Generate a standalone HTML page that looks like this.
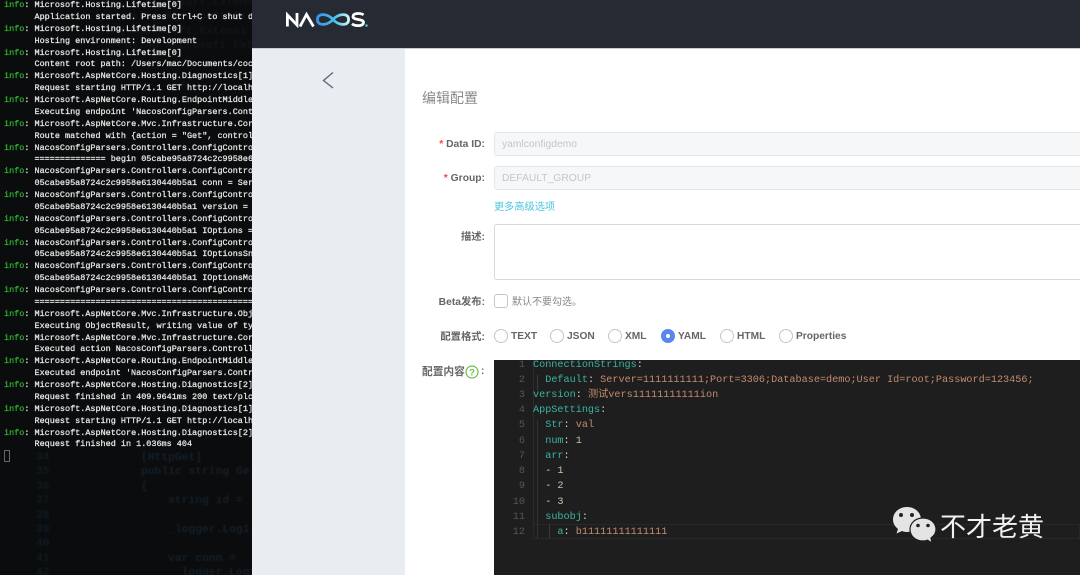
<!DOCTYPE html>
<html><head><meta charset="utf-8"><style>
html,body{margin:0;padding:0;width:1080px;height:575px;overflow:hidden;background:#fff}
body{position:relative;font-family:"Liberation Sans","Noto Sans CJK SC",sans-serif}
div,span.a{position:absolute;white-space:pre}
#term{left:0;top:0;width:252px;height:575px;background:#0b0c0d;overflow:hidden}
.ghost{font:bold 11.3px/14.4px "Liberation Mono",monospace;color:#141c20;filter:blur(.4px)}
#log{left:4px;top:0;width:248px;overflow:hidden;font:8.47px/11.87px "Liberation Mono","DejaVu Sans Mono",monospace;color:#e8e8e8;filter:blur(.3px);font-weight:400;-webkit-text-stroke:.25px #e8e8e8}
#log i{font-style:normal;color:#2fb52f;-webkit-text-stroke:.2px #2fb52f}
#nav{left:252px;top:0;width:828px;height:48px;background:#252a33}
#line{left:252px;top:48px;width:828px;height:1px;background:#c9ccd1}
#side{left:252px;top:49px;width:153px;height:526px;background:#e9ecf1}
.lb{right:595px;font-size:10.3px;line-height:14px;font-weight:700;color:#666;text-align:right}
.lb b{color:#f04a4a}
.inp{left:494px;width:590px;box-sizing:border-box;border:1px solid #e6e7eb;background:#f6f7f9;border-radius:3px;height:24px;font-size:10.3px;line-height:23px;color:#c4c6cc;padding-left:7px}
.rad{width:12px;height:12px;border:1px solid #c4c6cf;border-radius:50%;background:#fff;top:329px}
.rt{top:330px;font-size:10.2px;line-height:14px;font-weight:700;color:#666}
#ed{left:494px;top:360px;width:586px;height:215px;background:#1e1e1e;overflow:hidden}
.c{left:39px;margin-top:1px;font:10.18px/15px "Liberation Mono","Noto Sans CJK SC",monospace;color:#d4d4d4}
.n{left:0;width:31px;margin-top:1px;text-align:right;font:10.18px/15px "Liberation Mono",monospace;color:#555}
.k{color:#3bb5a0}.s{color:#c58a70}.v{color:#b5cea8}
</style></head><body>
<div id="term">
<div class="ghost" style="left:84px;top:-4px;color:#111618">         Microsoft.Extensi
      using Microsoft.Extensi
 using Microsoft.Extensi
      using Microsoft.Extensi</div>
<div class="ghost" style="left:36px;top:451px;color:#0f1c24">34
35
36
37
38
39
40
41
42</div>
<div class="ghost" style="left:141px;top:451px;color:#14202a">[HttpGet]
public string Ge
{
    string id =

    _logger.Log1

    var conn =
     _logger.Log1</div>
<div id="log"><i>info</i>: Microsoft.Hosting.Lifetime[0]
      Application started. Press Ctrl+C to shut d
<i>info</i>: Microsoft.Hosting.Lifetime[0]
      Hosting environment: Development
<i>info</i>: Microsoft.Hosting.Lifetime[0]
      Content root path: /Users/mac/Documents/coc
<i>info</i>: Microsoft.AspNetCore.Hosting.Diagnostics[1]
      Request starting HTTP/1.1 GET http://localh
<i>info</i>: Microsoft.AspNetCore.Routing.EndpointMiddle
      Executing endpoint 'NacosConfigParsers.Cont
<i>info</i>: Microsoft.AspNetCore.Mvc.Infrastructure.Cor
      Route matched with {action = "Get", control
<i>info</i>: NacosConfigParsers.Controllers.ConfigContro
      ============== begin 05cabe95a8724c2c9958e6
<i>info</i>: NacosConfigParsers.Controllers.ConfigContro
      05cabe95a8724c2c9958e6130440b5a1 conn = Ser
<i>info</i>: NacosConfigParsers.Controllers.ConfigContro
      05cabe95a8724c2c9958e6130440b5a1 version =
<i>info</i>: NacosConfigParsers.Controllers.ConfigContro
      05cabe95a8724c2c9958e6130440b5a1 IOptions =
<i>info</i>: NacosConfigParsers.Controllers.ConfigContro
      05cabe95a8724c2c9958e6130440b5a1 IOptionsSn
<i>info</i>: NacosConfigParsers.Controllers.ConfigContro
      05cabe95a8724c2c9958e6130440b5a1 IOptionsMo
<i>info</i>: NacosConfigParsers.Controllers.ConfigContro
      ===========================================
<i>info</i>: Microsoft.AspNetCore.Mvc.Infrastructure.Obj
      Executing ObjectResult, writing value of ty
<i>info</i>: Microsoft.AspNetCore.Mvc.Infrastructure.Cor
      Executed action NacosConfigParsers.Controll
<i>info</i>: Microsoft.AspNetCore.Routing.EndpointMiddle
      Executed endpoint 'NacosConfigParsers.Contr
<i>info</i>: Microsoft.AspNetCore.Hosting.Diagnostics[2]
      Request finished in 409.9641ms 200 text/plc
<i>info</i>: Microsoft.AspNetCore.Hosting.Diagnostics[1]
      Request starting HTTP/1.1 GET http://localh
<i>info</i>: Microsoft.AspNetCore.Hosting.Diagnostics[2]
      Request finished in 1.036ms 404</div>
<div style="left:4px;top:450px;width:4px;height:10px;border:1px solid #666"></div>
</div>
<div id="nav">
<svg style="position:absolute;left:33px;top:11px" width="90" height="17" viewBox="0 0 90 17" fill="none" stroke-width="2.8">
<defs><linearGradient id="g" gradientUnits="userSpaceOnUse" x1="31" y1="0" x2="66" y2="0"><stop offset="0" stop-color="#3a8fe8"/><stop offset=".55" stop-color="#45c4ea"/><stop offset="1" stop-color="#e8fafc"/></linearGradient></defs>
<path d="M2.400 15.500V4L12 14V2" stroke="#fff"/>
<path d="M15 15.500L21.500 3.500L28.500 15.500" stroke="#fff"/>
<path d="M48 8.500C43 2.500 32 1.500 32.500 8.500C32 15.500 43 14.500 48 8.500C53 2.500 64 1.500 63.500 8.500C64 15.500 53 14.500 48 8.500Z" stroke="url(#g)"/>
<path d="M78.500 4C76 1.800 68 1.800 68 5.500C68 9.500 78.500 7.500 78.500 11.500C78.500 15.500 70 15.300 67 12.800" stroke="#fff"/>
<circle cx="81.500" cy="14.500" r="1.300" fill="#4cc3d8" stroke="none"/>
</svg>
</div>
<div id="line"></div>
<div id="side"></div>
<svg style="position:absolute;left:320px;top:70px" width="18" height="20" viewBox="0 0 18 20" fill="none"><path d="M13 2.500L3.500 10.500L13 18" stroke="#5c6b80" stroke-width="1.400"/></svg>

<div style="left:422px;top:89px;font-size:14px;line-height:18px;color:#8a8a8a">编辑配置</div>

<div class="lb" style="top:138px"><b>*</b> Data ID:</div>
<div class="inp" style="top:132px">yamlconfigdemo</div>
<div class="lb" style="top:172px"><b>*</b> Group:</div>
<div class="inp" style="top:166px">DEFAULT_GROUP</div>
<div style="left:494px;top:201px;font-size:10.2px;line-height:14px;color:#4cc6e0">更多高级选项</div>
<div class="lb" style="top:231px">描述:</div>
<div style="left:494px;top:224px;width:590px;height:56px;box-sizing:border-box;border:1px solid #d8d9df;border-radius:3px;background:#fff"></div>

<div class="lb" style="top:296px">Beta发布:</div>
<div style="left:494px;top:294px;width:14px;height:14px;box-sizing:border-box;border:1px solid #c4c6cf;border-radius:3px;background:#fff"></div>
<div style="left:512px;top:296px;font-size:10px;line-height:14px;color:#888">默认不要勾选。</div>

<div class="lb" style="top:331px">配置格式:</div>
<div class="rad" style="left:494px"></div><div class="rt" style="left:511px">TEXT</div>
<div class="rad" style="left:550px"></div><div class="rt" style="left:567px">JSON</div>
<div class="rad" style="left:608px"></div><div class="rt" style="left:625px">XML</div>
<div class="rad" style="left:661px;background:#5a86ee;border-color:#5a86ee"></div><div style="left:666px;top:334px;width:4px;height:4px;border-radius:50%;background:#fff"></div><div class="rt" style="left:678px">YAML</div>
<div class="rad" style="left:720px"></div><div class="rt" style="left:737px">HTML</div>
<div class="rad" style="left:779px"></div><div class="rt" style="left:796px">Properties</div>

<div style="left:422px;top:365px;font-size:10.7px;line-height:14px;font-weight:700;color:#666">配置内容</div>
<svg style="position:absolute;left:465px;top:365px" width="14" height="14" viewBox="0 0 14 14"><circle cx="7" cy="7" r="6" fill="none" stroke="#6cc04a" stroke-width="1.200"/><text x="7" y="10.300" font-size="9.500" font-weight="700" text-anchor="middle" fill="#6cc04a" font-family="Liberation Sans">?</text></svg>
<div style="left:481px;top:365px;font-size:10px;line-height:14px;font-weight:700;color:#666">:</div>

<div id="ed">
<div style="left:39px;top:0;width:1px;height:178px;background:#2c2c2c"></div>
<div style="left:39px;top:164px;width:547px;height:15px;box-sizing:border-box;border:1px solid #282828"></div>
<div style="left:43px;top:15px;width:1px;height:15px;background:#3a3a3a"></div>
<div style="left:43px;top:60px;width:1px;height:119px;background:#333"></div>
<div style="left:55px;top:164px;width:1px;height:15px;background:#3a3a3a"></div>
<div class="n" style="top:-3px">1</div><div class="c" style="top:-3px"><span class="k">ConnectionStrings</span>:</div>
<div class="n" style="top:12px">2</div><div class="c" style="top:12px">  <span class="k">Default</span>: <span class="s">Server=1111111111;Port=3306;Database=demo;User Id=root;Password=123456;</span></div>
<div class="n" style="top:27px">3</div><div class="c" style="top:27px"><span class="k">version</span>: <span class="s">测试vers11111111111ion</span></div>
<div class="n" style="top:42px">4</div><div class="c" style="top:42px"><span class="k">AppSettings</span>:</div>
<div class="n" style="top:57px">5</div><div class="c" style="top:57px">  <span class="k">Str</span>: <span class="s">val</span></div>
<div class="n" style="top:73px">6</div><div class="c" style="top:73px">  <span class="k">num</span>: <span class="v">1</span></div>
<div class="n" style="top:88px">7</div><div class="c" style="top:88px">  <span class="k">arr</span>:</div>
<div class="n" style="top:103px">8</div><div class="c" style="top:103px">  - <span class="v">1</span></div>
<div class="n" style="top:118px">9</div><div class="c" style="top:118px">  - <span class="v">2</span></div>
<div class="n" style="top:134px">10</div><div class="c" style="top:134px">  - <span class="v">3</span></div>
<div class="n" style="top:149px">11</div><div class="c" style="top:149px">  <span class="k">subobj</span>:</div>
<div class="n" style="top:164px">12</div><div class="c" style="top:164px">    <span class="k">a</span>: <span class="s">b11111111111111</span></div>
</div>

<svg style="position:absolute;left:892px;top:506px" width="50" height="40" viewBox="0 0 50 40">
<path d="M15 1C7 1 1 6.500 1 13.500C1 17.500 3 20.500 6 23L4.500 27.500L10 25C12 25.700 13.500 26 15 26C23 26 29 20 29 13.500C29 6.500 23 1 15 1Z" fill="#e4e4e4"/>
<circle cx="9" cy="9" r="2" fill="#222"/><circle cx="20" cy="9" r="2" fill="#222"/>
<path d="M31 12C23.500 12 18 17 18 23.500C18 30 23.500 35 31 35C32.500 35 34 34.700 35.500 34.200L40 37L39 32C42.500 29.500 44 27 44 23.500C44 17 38.500 12 31 12Z" fill="#e4e4e4" stroke="#1e1e1e" stroke-width="1.200"/>
<circle cx="26" cy="19.500" r="1.800" fill="#222"/><circle cx="36" cy="19.500" r="1.800" fill="#222"/>
</svg>
<div style="left:940px;top:511px;font-size:26px;line-height:30px;color:#f2f2f2;font-family:'Noto Sans CJK SC','WenQuanYi Zen Hei',sans-serif">不才老黄</div>
</body></html>
